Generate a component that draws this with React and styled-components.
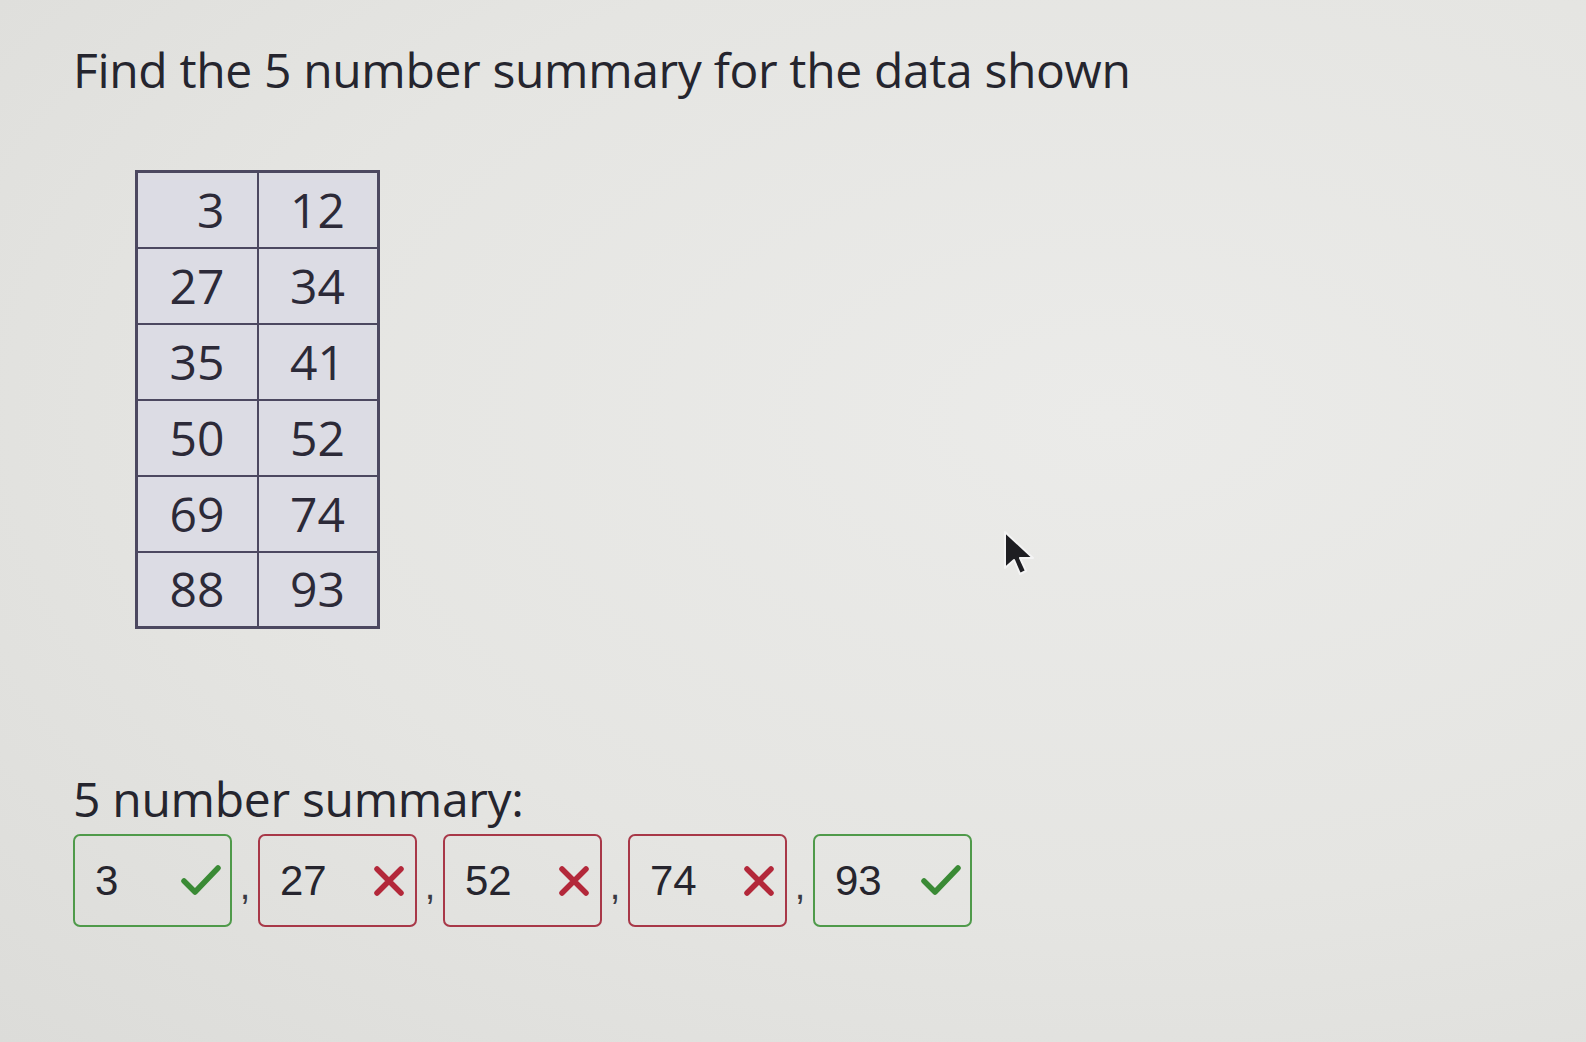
import React from "react";
import styled, { createGlobalStyle } from "styled-components";

const Global = createGlobalStyle`
  html, body { margin: 0; padding: 0; }
  body {
    background: #e4e4e1;
    font-family: "Open Sans", "Noto Sans", sans-serif;
    color: #2a2a33;
  }
`;

const Page = styled.div`
  position: relative;
  width: 1586px;
  height: 1042px;
  overflow: hidden;
  box-sizing: border-box;
  padding: 36px 0 0 73px;
  background: radial-gradient(ellipse at 70% 40%, #ebebe9 0%, #e5e5e2 55%, #dcdcd9 100%);
`;

const Title = styled.h1`
  margin: 0;
  font-size: 48px;
  font-weight: 400;
  line-height: 68px;
  letter-spacing: -0.35px;
  color: #25252e;
`;

const DataTable = styled.table`
  margin: 66px 0 0 62px;
  border-collapse: collapse;
  border: 3px solid #4c4860;
`;

const Cell = styled.td`
  width: 121px;
  height: 76px;
  box-sizing: border-box;
  padding: 0 32px 0 0;
  border: 2px solid #4c4860;
  background: #dcdce4;
  text-align: right;
  font-size: 48px;
  line-height: 1;
  color: #2c2a38;
`;

const Label = styled.div`
  margin-top: 138px;
  font-size: 48px;
  line-height: 64px;
  letter-spacing: -0.3px;
  color: #25252e;
`;

const AnswerRow = styled.div`
  display: flex;
  align-items: flex-end;
  margin-top: 3px;
`;

const Box = styled.div`
  width: 159px;
  height: 93px;
  box-sizing: border-box;
  border: 2px solid ${(p) => (p.$ok ? "#4f9a4a" : "#a83848")};
  border-radius: 7px;
  display: flex;
  align-items: center;
  justify-content: space-between;
  padding: 0 9px 0 20px;
  font-family: "Liberation Sans", Arial, sans-serif;
  font-size: 42px;
  color: #26252e;
`;

const Comma = styled.span`
  width: 26px;
  text-align: center;
  font-family: "Liberation Sans", Arial, sans-serif;
  font-size: 38px;
  line-height: 1;
  padding-bottom: 22px;
  color: #3a3a44;
`;

const Cursor = styled.svg`
  position: absolute;
  left: 1003px;
  top: 530px;
`;

const rows = [
  [3, 12],
  [27, 34],
  [35, 41],
  [50, 52],
  [69, 74],
  [88, 93],
];

const answers = [
  { v: "3", ok: true },
  { v: "27", ok: false },
  { v: "52", ok: false },
  { v: "74", ok: false },
  { v: "93", ok: true },
];

const Check = () => (
  <svg width="40" height="32" viewBox="0 0 40 32">
    <path d="M3 16 L14 27 L37 3" fill="none" stroke="#3a8a35" strokeWidth="5.5" strokeLinecap="round" strokeLinejoin="round" />
  </svg>
);

const Cross = () => (
  <svg width="34" height="34" viewBox="0 0 34 34">
    <path d="M5 5 L29 29 M29 5 L5 29" fill="none" stroke="#b3283a" strokeWidth="5.5" strokeLinecap="round" />
  </svg>
);

export default function App() {
  return (
    <>
      <Global />
      <Page>
        <Title>Find the 5 number summary for the data shown</Title>
        <DataTable>
          <tbody>
            {rows.map((r, i) => (
              <tr key={i}>
                {r.map((c, j) => (
                  <Cell key={j}>{c}</Cell>
                ))}
              </tr>
            ))}
          </tbody>
        </DataTable>
        <Label>5 number summary:</Label>
        <AnswerRow>
          {answers.map((a, i) => (
            <React.Fragment key={i}>
              <Box $ok={a.ok}>
                <span>{a.v}</span>
                {a.ok ? <Check /> : <Cross />}
              </Box>
              {i < answers.length - 1 && <Comma>,</Comma>}
            </React.Fragment>
          ))}
        </AnswerRow>
        <Cursor width="34" height="48" viewBox="0 0 34 48">
          <path d="M2 2 L2 38 L11 30 L17 44 L23 41 L17 28 L30 28 Z" fill="#1e1e22" stroke="#f4f4f4" strokeWidth="2" strokeLinejoin="round" />
        </Cursor>
      </Page>
    </>
  );
}
